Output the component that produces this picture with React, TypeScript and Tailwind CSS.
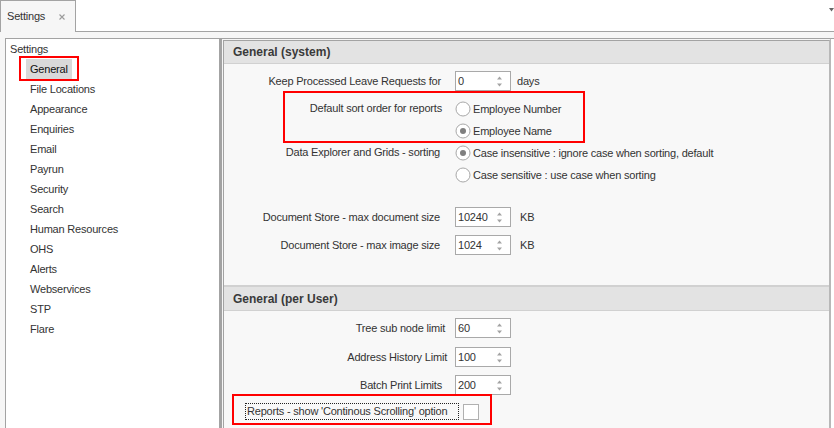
import React from 'react';

const tree = [
  'General',
  'File Locations',
  'Appearance',
  'Enquiries',
  'Email',
  'Payrun',
  'Security',
  'Search',
  'Human Resources',
  'OHS',
  'Alerts',
  'Webservices',
  'STP',
  'Flare',
];

function Spin({ value }: { value: string }) {
  return (
    <div className="flex h-[20px] w-[56px] shrink-0 items-center justify-between border border-[#a9a9a9] bg-white pl-[2px] pr-[7px]">
      <span className="leading-none">{value}</span>
      <svg width="7" height="13" viewBox="0 0 7 13">
        <path d="M3.5 1.5 L6 4.5 H1 Z" fill="#a3a3a3" />
        <path d="M3.5 11.5 L6 8.5 H1 Z" fill="#a3a3a3" />
      </svg>
    </div>
  );
}

function Radio({ checked, text }: { checked?: boolean; text: string }) {
  return (
    <div className="flex h-[16px] items-center gap-[2px]">
      <svg width="16" height="16" viewBox="0 0 16 16" className="shrink-0">
        <circle cx="8" cy="8" r="7" fill="#ffffff" stroke="#a8a8a8" />
        {checked && <circle cx="8" cy="8" r="3" fill="#7f7f7f" />}
      </svg>
      <span className="whitespace-nowrap">{text}</span>
    </div>
  );
}

export default function App() {
  return (
    <div className="flex h-[428px] w-[834px] flex-col overflow-hidden bg-[#f6f6f6] font-['Liberation_Sans',Arial,sans-serif] text-[11px] tracking-[-0.2px] text-[#333]">
      {/* tab strip */}
      <div className="flex h-[32px] shrink-0">
        <div className="flex w-[76px] items-center border-l border-r border-t border-[#a3a3a3] pb-px pl-[6px]">
          <span>Settings</span>
          <svg width="6" height="6" viewBox="0 0 6 6" className="ml-[14px] mt-[2px]">
            <path d="M0.5 0.5 L5.5 5.5 M5.5 0.5 L0.5 5.5" stroke="#9b9b9b" strokeWidth="1.1" />
          </svg>
        </div>
        <div className="flex flex-1 items-start justify-end border-b border-[#a3a3a3] bg-white pt-[8px]">
          <svg width="5" height="4" viewBox="0 0 5 4">
            <path d="M0 0 H5 L2.5 3.5 Z" fill="#666" />
          </svg>
        </div>
      </div>

      <div className="flex min-h-0 flex-1 pt-[6px]">
        {/* navigation tree */}
        <div className="ml-[5px] w-[216px] shrink-0 border-l border-r-2 border-t border-[#a3a3a3] bg-white">
          <div className="flex h-[20px] items-center pl-[4px]">Settings</div>
          {tree.map((t, i) => (
            <div key={t} className="relative flex h-[20px] pl-[20px]">
              <span className={`flex h-full items-center px-[4px] ${i === 0 ? 'bg-[#d9d9d9] text-[#111]' : ''}`}>{t}</span>
              {i === 0 && <span className="pointer-events-none absolute left-[13px] top-[-3px] h-[25px] w-[60px] border-2 border-[#ff0000]" />}
            </div>
          ))}
        </div>

        {/* settings panel */}
        <div className="flex w-[610px] shrink-0 flex-col border-l-[3px] border-t-[3px] border-double border-[#a3a3a3] border-r-2 border-r-[#b8b8b8]">
          <div className="flex h-[23px] shrink-0 items-center border-b border-[#d1d1d1] bg-[#e3e3e3] pl-[9px] text-[12px] font-bold tracking-normal text-[#3a3a3a]">
            General (system)
          </div>
          <div className="h-[221px] shrink-0 bg-[#f8f8f8] pt-[7px]">
            <div className="flex h-[20px] items-center">
              <div className="w-[231px] shrink-0 pr-[14px] text-right">Keep Processed Leave Requests for</div>
              <Spin value="0" />
              <span className="ml-[6px]">days</span>
            </div>

            <div className="relative mt-[10px] flex items-start">
              <div className="h-[16px] w-[231px] shrink-0 pr-[13px] text-right leading-[14px]">Default sort order for reports</div>
              <div className="flex flex-col gap-[6px]">
                <Radio text="Employee Number" />
                <Radio checked text="Employee Name" />
              </div>
              <span className="pointer-events-none absolute left-[59px] top-[-10px] h-[52px] w-[302px] border-2 border-[#ff0000]" />
            </div>

            <div className="mt-[6px] flex items-start">
              <div className="h-[16px] w-[231px] shrink-0 pr-[15px] text-right leading-[14px]">Data Explorer and Grids - sorting</div>
              <div className="flex flex-col gap-[6px]">
                <Radio checked text="Case insensitive : ignore case when sorting, default" />
                <Radio text="Case sensitive : use case when sorting" />
              </div>
            </div>

            <div className="mt-[24px] flex h-[20px] items-center">
              <div className="w-[231px] shrink-0 pr-[15px] text-right">Document Store - max document size</div>
              <Spin value="10240" />
              <span className="ml-[9px]">KB</span>
            </div>
            <div className="mt-[8px] flex h-[20px] items-center">
              <div className="w-[231px] shrink-0 pr-[15px] text-right">Document Store - max image size</div>
              <Spin value="1024" />
              <span className="ml-[9px]">KB</span>
            </div>
          </div>

          <div className="flex h-[26px] shrink-0 items-center border-b border-t-2 border-[#d1d1d1] bg-[#e3e3e3] pl-[9px] text-[12px] font-bold tracking-normal text-[#3a3a3a]">
            General (per User)
          </div>
          <div className="flex-1 bg-[#f8f8f8] pt-[7px]">
            <div className="flex h-[20px] items-center">
              <div className="w-[231px] shrink-0 pr-[10px] text-right">Tree sub node limit</div>
              <Spin value="60" />
            </div>
            <div className="mt-[9px] flex h-[20px] items-center">
              <div className="w-[231px] shrink-0 pr-[8px] text-right">Address History Limit</div>
              <Spin value="100" />
            </div>
            <div className="mt-[8px] flex h-[20px] items-center">
              <div className="w-[231px] shrink-0 pr-[13px] text-right">Batch Print Limits</div>
              <Spin value="200" />
            </div>
            <div className="mt-[5px] flex h-[22px] items-center">
              <div className="relative ml-[21px] flex h-[22px] items-center">
                <span className="flex h-[17px] w-[214px] items-center border border-dotted border-[#222] pl-px whitespace-nowrap">
                  Reports - show 'Continous Scrolling' option
                </span>
                <span className="ml-[4px] mt-px h-[16px] w-[16px] border border-[#b0b0b0] bg-white" />
                <span className="pointer-events-none absolute -bottom-[3px] -left-[13px] -right-[13px] -top-[6px] border-2 border-[#ff0000]" />
              </div>
            </div>
          </div>
        </div>

        <div className="flex-1 border-t border-[#a3a3a3] bg-white" />
      </div>
    </div>
  );
}
